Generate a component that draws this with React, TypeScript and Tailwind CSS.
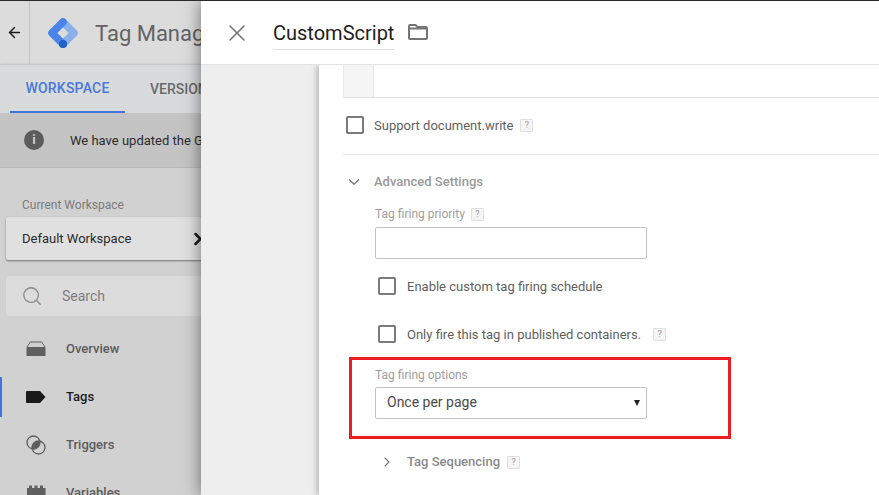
import { ArrowLeft, ChevronDown, ChevronRight, Search, X } from "lucide-react";

const font = "font-['Roboto','Liberation_Sans',sans-serif]";

const Logo = () => (
  <svg width="30" height="32" viewBox="0 0 30 32" fill="none" strokeLinecap="round" strokeLinejoin="round">
    <path d="M15 5 L26 16 L15 27" stroke="#8ab0e8" strokeWidth="7.5" />
    <path d="M15 5 L4 16 L15 27" stroke="#4a84ea" strokeWidth="7.5" />
    <circle cx="15" cy="27" r="4" fill="#1e62c8" />
  </svg>
);

const HelpBadge = () => (
  <span className="flex h-[13px] w-[13px] items-center justify-center rounded-[1px] border border-[#e0e0e0] bg-[#f5f5f5] text-[9px] leading-none text-[#9e9e9e]">
    ?
  </span>
);

const Check = () => (
  <span className="block h-[18px] w-[18px] shrink-0 rounded-[2px] border-2 border-[#7a7a7a]" />
);

const NavItem = ({
  label,
  active,
  icon,
}: {
  label: string;
  active?: boolean;
  icon: React.ReactNode;
}) => (
  <div className={`flex h-10 items-center gap-[20px] ${active ? "border-l-2 border-[#3f76dd] pl-[24px]" : "pl-[26px]"}`}>
    <span className="flex h-5 w-5 items-center justify-center">{icon}</span>
    <span className={`whitespace-nowrap text-[13px] font-medium ${active ? "text-[#1c1c1c]" : "text-[#5c5c5c]"}`}>
      {label}
    </span>
  </div>
);

const Sidebar = () => (
  <aside className="flex w-[201px] shrink-0 flex-col overflow-hidden bg-[#d1d1d1]">
    <div className="flex h-[63px] shrink-0 items-center bg-[#dcdcdc]">
      <div className="flex h-full w-[30px] shrink-0 items-center justify-center border-r border-[#c4c4c4]">
        <ArrowLeft size={17} strokeWidth={2} color="#1a1a1a" />
      </div>
      <div className="ml-[18px] shrink-0">
        <Logo />
      </div>
      <span className="ml-[17px] whitespace-nowrap pt-[2px] text-[22px] text-[#636363]">Tag Manager</span>
    </div>
    <div className="flex h-[49px] shrink-0 border-t border-[#c6c6c6] bg-[#d9dadc] shadow-[0_2px_4px_rgba(0,0,0,0.35)]">
      <div className="ml-[10px] flex h-full w-[115px] shrink-0 items-center justify-center border-b-2 border-[#3f76dd] text-[14px] font-medium tracking-[0.2px] text-[#4a78dc]">
        WORKSPACE
      </div>
      <div className="ml-[25px] flex h-full items-center whitespace-nowrap text-[14px] font-medium text-[#6a6a6a]">
        VERSIONS
      </div>
    </div>
    <div className="flex h-[55px] shrink-0 items-center border-b border-[#b8b8b8] bg-[#c4c4c4] pl-[24px]">
      <span className="flex h-5 w-5 shrink-0 items-center justify-center rounded-full bg-[#5c5c5c] text-[13px] font-bold text-[#d0d0d0]">
        i
      </span>
      <span className="ml-[26px] whitespace-nowrap pt-[2px] text-[13px] text-[#2c2c2c]">We have updated the Google</span>
    </div>
    <div className="ml-[22px] mt-[30px] text-[12px] leading-[14px] text-[#7c7c7c]">Current Workspace</div>
    <div className="ml-[6px] mt-[5px] flex h-[43px] w-[210px] shrink-0 items-center rounded-[2px] bg-[#e0e0e0] pl-[16px] shadow-[0_1px_2px_rgba(0,0,0,0.45)]">
      <span className="whitespace-nowrap text-[13px] text-[#2a2a2a]">Default Workspace</span>
      <ChevronRight size={20} strokeWidth={3} color="#1a1a1a" className="ml-[57px] shrink-0" />
    </div>
    <div className="ml-[6px] mt-[16px] flex h-10 w-[210px] shrink-0 items-center rounded-[2px] bg-[#dcdcdc] pl-[15px]">
      <Search size={22} strokeWidth={1.5} color="#8c8c8c" />
      <span className="ml-[19px] text-[14px] text-[#7e7e7e]">Search</span>
    </div>
    <div className="mt-[13px] flex flex-col gap-[8px]">
      <NavItem
        label="Overview"
        icon={
          <svg width="20" height="16" viewBox="0 0 20 16">
            <path d="M0.5 6 H19.5 V15 H0.5 Z" fill="#5f5f5f" />
            <path d="M1 6 L4.3 1 H15.7 L19 6" fill="none" stroke="#5f5f5f" strokeWidth="1" />
          </svg>
        }
      />
      <NavItem
        active
        label="Tags"
        icon={
          <svg width="20" height="12" viewBox="0 0 20 12">
            <path d="M1 0 H14 L19.5 6 L14 12 H1 a1 1 0 0 1 -1 -1 V1 a1 1 0 0 1 1 -1 Z" fill="#1a1a1a" />
          </svg>
        }
      />
      <NavItem
        label="Triggers"
        icon={
          <svg width="20" height="20" viewBox="0 0 20 20">
            <circle cx="7.5" cy="7.5" r="6.5" fill="none" stroke="#5f5f5f" strokeWidth="1.3" />
            <circle cx="12.5" cy="12.5" r="6.5" fill="none" stroke="#5f5f5f" strokeWidth="1.3" />
            <path d="M13.86 6.14 A6.5 6.5 0 0 1 6.14 13.86 A6.5 6.5 0 0 1 13.86 6.14 Z" fill="#5f5f5f" />
          </svg>
        }
      />
      <NavItem
        label="Variables"
        icon={
          <svg width="20" height="16" viewBox="0 0 20 16">
            <path d="M1 3 H3 V0.5 H6 V3 H8.5 V0.5 H11.5 V3 H14 V0.5 H17 V3 H19.5 V16 H1 Z" fill="#5f5f5f" />
          </svg>
        }
      />
    </div>
  </aside>
);

const Panel = () => (
  <main className="relative z-10 flex min-w-0 flex-1 flex-col bg-white shadow-[0_0_16px_rgba(0,0,0,0.5)]">
    <header className="relative z-10 flex h-[64px] shrink-0 items-center border-b border-[#e3e3e3] bg-white">
      <X size={28} strokeWidth={1.3} color="#757575" className="ml-[22px] shrink-0" />
      <div className="ml-[22px] flex h-[34px] items-center border-b border-[#e0e0e0] pt-[1px] text-[20px] text-[#212121]">
        CustomScript
      </div>
      <svg width="20" height="16" viewBox="0 0 20 16" className="-mt-[1px] ml-[14px]">
        <path d="M1 14 V2.2 A1.2 1.2 0 0 1 2.2 1 H7.5 L9.5 3 H17.8 A1.2 1.2 0 0 1 19 4.2 V14 A1 1 0 0 1 18 15 H2 A1 1 0 0 1 1 14 Z M1 4.6 H19" fill="none" stroke="#757575" strokeWidth="2" />
      </svg>
    </header>
    <div className="flex min-h-0 flex-1 bg-[#eeeeee]">
      <div className="w-[118px] shrink-0" />
      <section className="min-w-0 flex-1 bg-white pl-[24px] text-[13px] shadow-[-2px_0_6px_rgba(0,0,0,0.25)]">
        <div className="flex h-[33px] border-b border-[#e0e0e0]">
          <div className="w-[31px] border-x border-[#e8e8e8] bg-[#f5f5f5]" />
        </div>
        <div className="ml-[3px] mt-[18px] flex h-[18px] items-center">
          <Check />
          <span className="ml-[10px] pt-[2px] text-[#5f5f5f]">Support document.write</span>
          <span className="ml-[7px]"><HelpBadge /></span>
        </div>
        <div className="mt-[20px] h-px bg-[#e6e6e6]" />
        <div className="ml-[3px] mt-[20px] flex h-[14px] items-center">
          <ChevronDown size={18} strokeWidth={1.6} color="#757575" className="-ml-[1px]" />
          <span className="ml-[11px] font-medium text-[#9a9a9a]">Advanced Settings</span>
        </div>
        <div className="ml-[32px] mt-[18px] flex h-[14px] items-center text-[12px] text-[#9e9e9e]">
          Tag firing priority
          <span className="ml-[6px]"><HelpBadge /></span>
        </div>
        <div className="ml-[32px] mt-[6px] h-8 w-[272px] rounded-[2px] border border-[#c2c2c2]" />
        <div className="ml-[35px] mt-[18px] flex h-[18px] items-center">
          <Check />
          <span className="ml-[11px] pt-[2px] text-[#5f5f5f]">Enable custom tag firing schedule</span>
        </div>
        <div className="ml-[35px] mt-[30px] flex h-[18px] items-center">
          <Check />
          <span className="ml-[11px] pt-[2px] text-[#5f5f5f]">Only fire this tag in published containers.</span>
          <span className="ml-[12px]"><HelpBadge /></span>
        </div>
        <div className="ml-[6px] mt-[14px] h-[82px] w-[382px] border-[3px] border-[#ed1c24] pl-[23px] pt-[8px]">
          <div className="h-[14px] text-[12px] leading-[14px] text-[#9e9e9e]">Tag firing options</div>
          <div className="mt-[5px] flex h-8 w-[272px] items-center justify-between rounded-[2px] border border-[#c2c2c2] pb-[2px] pl-[11px] pr-[6px] text-[14px] text-[#4a4a4a]">
            Once per page
            <span className="mt-[2px] h-0 w-0 border-x-[3px] border-t-[6px] border-x-transparent border-t-[#222222]" />
          </div>
        </div>
        <div className="ml-[35px] mt-[16px] flex h-[14px] items-center">
          <ChevronRight size={16} strokeWidth={1.6} color="#757575" className="ml-[1px]" />
          <span className="ml-[12px] font-medium text-[#8a8a8a]">Tag Sequencing</span>
          <span className="ml-[7px]"><HelpBadge /></span>
        </div>
      </section>
    </div>
  </main>
);

export default function App() {
  return (
    <div className={`flex h-[495px] w-[879px] overflow-hidden border-t border-[#2a2a2a] ${font}`}>
      <Sidebar />
      <Panel />
    </div>
  );
}
